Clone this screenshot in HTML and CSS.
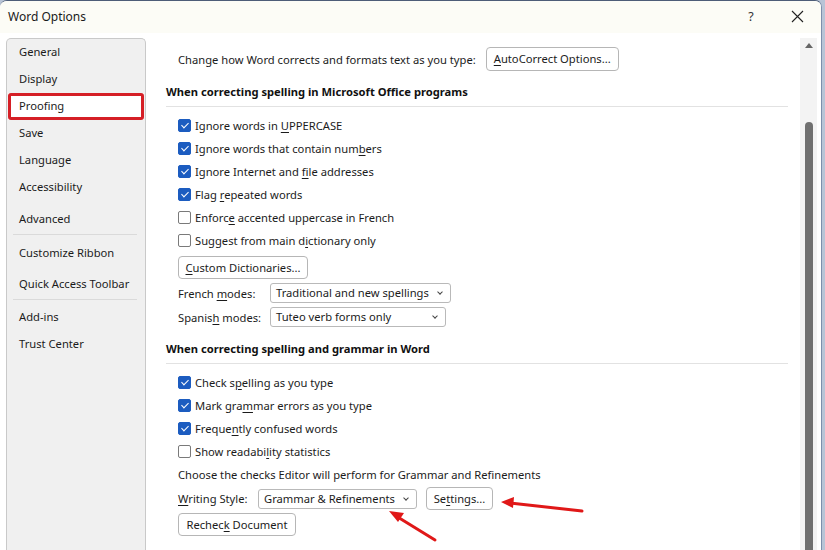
FILE: index.html
```html
<!DOCTYPE html>
<html>
<head>
<meta charset="utf-8">
<link rel="stylesheet" href="styles.css">
</head>
<body>
<div class="window">
  <div class="titlebar">
    <span class="title">Word Options</span>
    <span class="tb-help">?</span>
    <span class="tb-close"><svg width="13" height="13" viewBox="0 0 13 13"><path d="M1 1L12 12M12 1L1 12" stroke="#222" stroke-width="1.1" fill="none"/></svg></span>
  </div>
  <div class="main">
    <nav class="sidebar">
      <div class="nav-item">General</div>
      <div class="nav-item">Display</div>
      <div class="nav-item selected">Proofing</div>
      <div class="nav-item">Save</div>
      <div class="nav-item">Language</div>
      <div class="nav-item">Accessibility</div>
      <div class="nav-item spaced">Advanced</div>
      <div class="nav-sep"></div>
      <div class="nav-item">Customize Ribbon</div>
      <div class="nav-item spaced-sm">Quick Access Toolbar</div>
      <div class="nav-sep sep2"></div>
      <div class="nav-item">Add-ins</div>
      <div class="nav-item">Trust Center</div>
    </nav>
    <div class="content">
      <div class="row top-row">
        <span class="label">Change how Word corrects and formats text as you type:</span>
        <span class="btn autocorrect"><span><u>A</u>utoCorrect Options...</span></span>
      </div>
      <div class="heading">When correcting spelling in Microsoft Office programs</div>
      <div class="group first">
        <div class="check-row"><span class="cb on"></span><span class="txt">Ignore words in <u>U</u>PPERCASE</span></div>
        <div class="check-row"><span class="cb on"></span><span class="txt">Ignore words that contain num<u>b</u>ers</span></div>
        <div class="check-row"><span class="cb on"></span><span class="txt">Ignore Internet and <u>f</u>ile addresses</span></div>
        <div class="check-row"><span class="cb on"></span><span class="txt">Flag <u>r</u>epeated words</span></div>
        <div class="check-row"><span class="cb"></span><span class="txt">Enforc<u>e</u> accented uppercase in French</span></div>
        <div class="check-row"><span class="cb"></span><span class="txt">Suggest from main d<u>i</u>ctionary only</span></div>
        <div class="btn-row dict-row"><span class="btn dict"><span><u>C</u>ustom Dictionaries...</span></span></div>
        <div class="select-row">
          <span class="sel-label">French <u>m</u>odes:</span>
          <span class="select french"><span>Traditional and new spellings</span><span class="chev"></span></span>
        </div>
        <div class="select-row">
          <span class="sel-label">Spanis<u>h</u> modes:</span>
          <span class="select spanish"><span>Tuteo verb forms only</span><span class="chev"></span></span>
        </div>
      </div>
      <div class="heading h2">When correcting spelling and grammar in Word</div>
      <div class="group first">
        <div class="check-row"><span class="cb on"></span><span class="txt">Check s<u>p</u>elling as you type</span></div>
        <div class="check-row"><span class="cb on"></span><span class="txt">Mark gra<u>m</u>mar errors as you type</span></div>
        <div class="check-row"><span class="cb on"></span><span class="txt">Freque<u>n</u>tly confused words</span></div>
        <div class="check-row"><span class="cb"></span><span class="txt">Show readabi<u>l</u>ity statistics</span></div>
        <div class="text-row">Choose the checks Editor will perform for Grammar and Refinements</div>
        <div class="style-row">
          <span class="ws-label"><u>W</u>riting Style:</span>
          <span class="select writing"><span>Grammar &amp; Refinements</span><span class="chev"></span></span>
          <span class="btn settings"><span>Se<u>t</u>tings...</span></span>
        </div>
        <div class="btn-row recheck-row"><span class="btn recheck"><span>Rechec<u>k</u> Document</span></span></div>
      </div>
    </div>
    <div class="scrollbar">
      <div class="scroll-up"></div>
      <div class="thumb"></div>
    </div>
  </div>
  <svg class="annot" width="825" height="550" viewBox="0 0 825 550">
    <g stroke="#e01818" stroke-width="3" stroke-linecap="round" fill="none">
      <line x1="435" y1="540" x2="396" y2="516"/>
      <line x1="582" y1="511" x2="510" y2="503"/>
    </g>
    <g fill="#e01818">
      <polygon points="389,511 404,513 398,522"/>
      <polygon points="501,502 514,497 513,508"/>
    </g>
  </svg>
</div>
</body>
</html>
```

FILE: styles.css
```css
* { box-sizing: border-box; }
html, body { margin: 0; padding: 0; }
body {
  width: 825px;
  height: 550px;
  overflow: hidden;
  background: #b8c4d6;
  font-family: "Noto Sans", "Segoe UI", sans-serif;
  font-size: 11.2px;
  color: #1b1b1b;
}
u { text-decoration: underline; text-underline-offset: 2px; }
.window {
  position: relative;
  width: 822px;
  height: 550px;
  background: #ffffff;
  border-top: 1px solid #4d5d78;
  border-right: 1px solid #7d8fab;
  border-top-left-radius: 7px;
  border-top-right-radius: 7px;
  overflow: hidden;
  display: flex;
  flex-direction: column;
}
.titlebar {
  height: 32px;
  flex: none;
  display: flex;
  align-items: center;
  background: #fcfcf6;
  padding-left: 8px;
}
.title { font-size: 12px; color: #1a1a1a; flex: 1; padding-bottom: 2px; }
.tb-help { width: 46px; text-align: center; font-size: 12.5px; color: #333; padding-bottom: 2px; }
.tb-close { width: 46px; display: flex; justify-content: center; margin-right: 1px; padding-bottom: 2px; }
.main {
  flex: 1;
  display: flex;
  padding-top: 5px;
  min-height: 0;
}
.sidebar {
  width: 140px;
  flex: none;
  margin-left: 6px;
  background: #f0f0f0;
  border: 1px solid #c9c9c9;
  border-bottom: none;
  border-radius: 5px 5px 0 0;
}
.nav-item {
  position: relative;
  height: 27px;
  line-height: 25px;
  padding-bottom: 2px;
  padding-left: 12px;
  color: #1b1b1b;
  white-space: nowrap;
}
.nav-item.spaced { margin-top: 5px; }
.nav-item.spaced-sm { margin-top: 4px; }
.nav-item.selected { background: #ffffff; margin: 0 1px; padding-left: 11px; }
.nav-item.selected::after {
  content: "";
  position: absolute;
  left: 0; right: 0; top: 0; bottom: 0;
  border: 3px solid #d51f26;
  border-radius: 3px;
}
.nav-sep {
  height: 1px;
  background: #dadada;
  margin: 1px 8px 5px 6px;
}
.nav-sep.sep2 { margin-bottom: 4px; }
.content {
  flex: 1;
  padding-left: 20px;
  padding-top: 9px;
  min-width: 0;
}
.row { display: flex; align-items: center; }
.top-row { height: 24px; padding-left: 12px; gap: 10px; white-space: nowrap; }
.btn {
  display: inline-block;
  color: #1b1b1b;
  background: #fff;
  border: 1px solid #b6b6b6;
  border-radius: 4px;
  height: 23px;
  line-height: 21px;
  text-align: center;
  white-space: nowrap;
}
.autocorrect { height: 24px; line-height: 22px; width: 133px; }
.heading {
  margin-top: 11px;
  height: 25px;
  line-height: 20px;
  font-weight: bold;
  color: #111;
  border-bottom: 1px solid #e2e2e2;
  margin-right: 12px;
  white-space: nowrap;
}
.heading.h2 { margin-top: 12px; }
.group { padding-left: 12px; }
.group.first { margin-top: 7px; }
.check-row {
  height: 23px;
  display: flex;
  align-items: center;
  white-space: nowrap;
}
.txt { white-space: nowrap; }
.cb {
  width: 13px;
  height: 13px;
  border: 1px solid #7a7a7a;
  border-radius: 2px;
  margin-right: 4px;
  background: #fff;
  flex: none;
  position: relative;
}
.cb.on {
  background: #1c5cc0;
  border-color: #1c5cc0;
}
.cb.on::after {
  content: "";
  position: absolute;
  left: 3.5px;
  top: 1px;
  width: 3px;
  height: 6px;
  border: solid #fff;
  border-width: 0 1.6px 1.6px 0;
  transform: rotate(45deg);
}
.btn-row { height: 23px; }
.dict-row { margin-top: 4px; }
.dict { width: 130px; }
.select-row {
  margin-top: 4px;
  height: 20px;
  display: flex;
  align-items: center;
  white-space: nowrap;
}
.sel-label { width: 92px; flex: none; }
.select {
  position: relative;
  display: inline-block;
  height: 20px;
  line-height: 18px;
  border: 1px solid #b9b9b9;
  border-radius: 3px;
  padding-left: 5px;
  background: #fff;
  white-space: nowrap;
}
.chev {
  position: absolute;
  right: 8px;
  top: 6px;
  width: 4px;
  height: 4px;
  border: solid #444;
  border-width: 0 1.2px 1.2px 0;
  transform: rotate(45deg);
}
.french { width: 181px; }
.spanish { width: 176px; }
.writing { width: 159px; }
.text-row { height: 23px; line-height: 23px; white-space: nowrap; }
.style-row {
  height: 23px;
  margin-top: 1px;
  display: flex;
  align-items: center;
  white-space: nowrap;
}
.ws-label { width: 80px; flex: none; }
.settings { margin-left: 9px; width: 67px; }
.recheck-row { margin-top: 3px; }
.recheck { width: 118px; }
.scrollbar {
  width: 17px;
  flex: none;
  margin-right: 4px;
  background: #f3f3f3;
  display: flex;
  flex-direction: column;
  align-items: center;
}
.scroll-up {
  margin-top: 5px;
  width: 0;
  height: 0;
  border-left: 4px solid transparent;
  border-right: 4px solid transparent;
  border-bottom: 5px solid #666;
}
.thumb {
  margin-top: 74px;
  width: 8px;
  flex: 1;
  background: #707070;
  border-radius: 4px 4px 0 0;
}
.annot { position: absolute; left: 0; top: -1px; pointer-events: none; }
```
